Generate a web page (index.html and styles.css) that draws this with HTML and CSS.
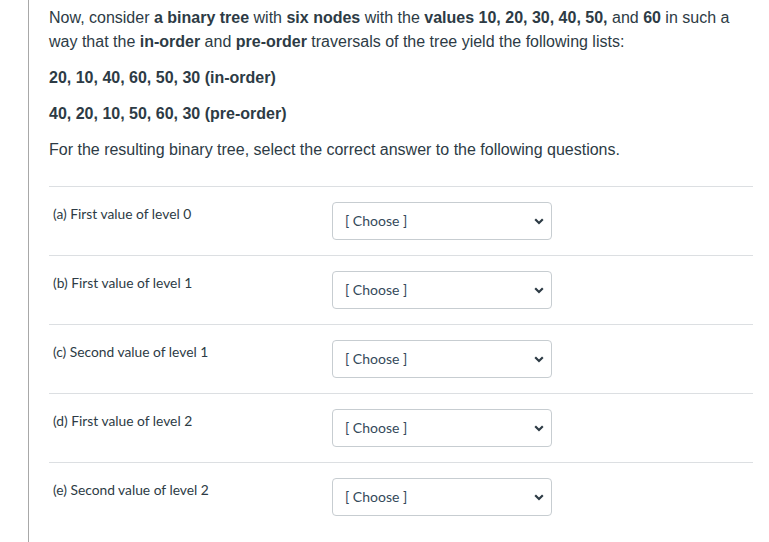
FILE: index.html
```html
<!DOCTYPE html>
<html lang="en">
<head>
<meta charset="utf-8">
<title>Binary tree question</title>
<link rel="stylesheet" href="styles.css">
</head>
<body>
<div class="page">
  <div class="question">
    <p>Now, consider <b>a binary tree</b> with <b>six nodes</b> with the <b>values 10, 20, 30, 40, 50,</b> and <b>60</b> in such a way that the <b>in-order</b> and <b>pre-order</b> traversals of the tree yield the following lists:</p>
    <p><b>20, 10, 40, 60, 50, 30 (in-order)</b></p>
    <p><b>40, 20, 10, 50, 60, 30 (pre-order)</b></p>
    <p>For the resulting binary tree, select the correct answer to the following questions.</p>
  </div>
  <div class="answers">
    <div class="row">
      <div class="label">(a) First value of level 0</div>
      <div class="select"><span>[ Choose ]</span><svg class="chev" width="10" height="7" viewBox="0 0 10 7"><path d="M1.2 1.3 L5 5 L8.8 1.3" fill="none" stroke="#2d3b45" stroke-width="2.2"/></svg></div>
    </div>
    <div class="row">
      <div class="label">(b) First value of level 1</div>
      <div class="select"><span>[ Choose ]</span><svg class="chev" width="10" height="7" viewBox="0 0 10 7"><path d="M1.2 1.3 L5 5 L8.8 1.3" fill="none" stroke="#2d3b45" stroke-width="2.2"/></svg></div>
    </div>
    <div class="row">
      <div class="label">(c) Second value of level 1</div>
      <div class="select"><span>[ Choose ]</span><svg class="chev" width="10" height="7" viewBox="0 0 10 7"><path d="M1.2 1.3 L5 5 L8.8 1.3" fill="none" stroke="#2d3b45" stroke-width="2.2"/></svg></div>
    </div>
    <div class="row">
      <div class="label">(d) First value of level 2</div>
      <div class="select"><span>[ Choose ]</span><svg class="chev" width="10" height="7" viewBox="0 0 10 7"><path d="M1.2 1.3 L5 5 L8.8 1.3" fill="none" stroke="#2d3b45" stroke-width="2.2"/></svg></div>
    </div>
    <div class="row">
      <div class="label">(e) Second value of level 2</div>
      <div class="select"><span>[ Choose ]</span><svg class="chev" width="10" height="7" viewBox="0 0 10 7"><path d="M1.2 1.3 L5 5 L8.8 1.3" fill="none" stroke="#2d3b45" stroke-width="2.2"/></svg></div>
    </div>
  </div>
</div>
</body>
</html>
```
FILE: styles.css
```css
html, body {
  margin: 0;
  padding: 0;
  background: #ffffff;
}
body {
  color: #2d3b45;
  font-family: "Liberation Sans", Arial, sans-serif;
}
.page {
  margin-left: 28px;
  border-left: 1px solid #a8a8a8;
  min-height: 100vh;
  padding: 6px 16px 0 20px;
  box-sizing: border-box;
}
.question p {
  margin: 0 0 12px 0;
  font-size: 16px;
  line-height: 24px;
}
.question p:last-child {
  margin-bottom: 0;
}
.question b {
  font-weight: bold;
}
.answers {
  margin-top: 24px;
}
.row {
  display: grid;
  grid-template-columns: 283px 220px;
  align-items: start;
  border-top: 1px solid #dcdfe2;
  padding: 15px 0 15px 0;
}
.label {
  font-family: Lato, "Liberation Sans", sans-serif;
  font-size: 13.8px;
  line-height: 18px;
  margin-top: 3px;
  padding-left: 4px;
}
.select {
  height: 38px;
  box-sizing: border-box;
  border: 1px solid #c7cdd1;
  border-radius: 4px;
  display: flex;
  align-items: center;
  justify-content: space-between;
  padding: 0 7px 2px 12px;
  font-family: Lato, "Liberation Sans", sans-serif;
  font-size: 14px;
  color: #34495a;
}
.chev {
  display: block;
  margin-top: 2px;
}
```
